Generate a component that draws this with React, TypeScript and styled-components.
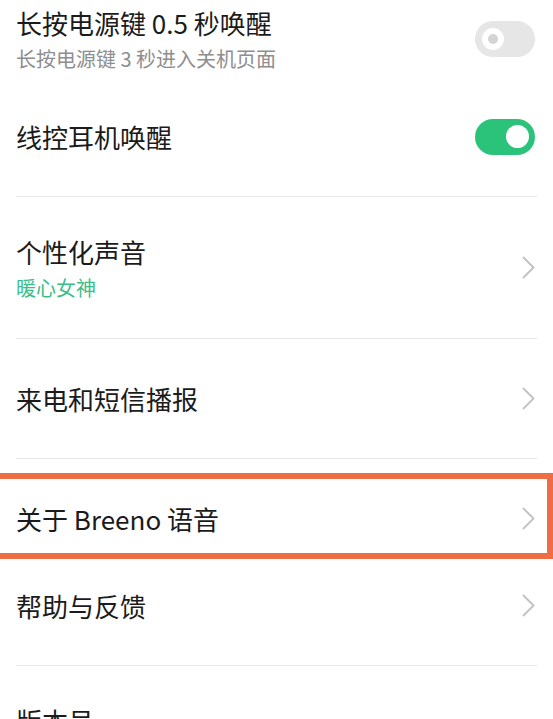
import React from "react";
import styled, { createGlobalStyle } from "styled-components";

const GlobalStyle = createGlobalStyle`
  html, body {
    margin: 0;
    padding: 0;
    background: #ffffff;
    overflow: hidden;
  }
  body {
    font-family: "Noto Sans CJK SC", "Noto Sans", sans-serif;
  }
`;

const Screen = styled.div`
  width: 553px;
  height: 719px;
  overflow: hidden;
  background: #ffffff;
`;

// list is scrolled a little, so the first item is cut at the top
const List = styled.div`
  margin-top: -32px;
`;

const Group = styled.section`
  padding: 16px 0;
`;

const Divider = styled.div`
  height: 1px;
  margin: 0 16px;
  background: #e8e8e8;
`;

const Row = styled.div<{ $twoLine?: boolean; $marked?: boolean }>`
  position: relative;
  display: flex;
  align-items: center;
  height: ${(p) => (p.$twoLine ? "109px" : "87px")};
  padding: 0 18px 0 16px;
  box-sizing: border-box;

  ${(p) =>
    p.$marked &&
    `
    &::after {
      content: "";
      position: absolute;
      top: -2px;
      bottom: 3px;
      left: -10px;
      right: 0;
      border: 6px solid #ef6d44;
      pointer-events: none;
    }
  `}
`;

const Texts = styled.div`
  flex: 1;
  display: flex;
  flex-direction: column;
  gap: 6px;
`;

const Title = styled.div`
  font-size: 26px;
  line-height: 34px;
  color: #1b1b1b;
`;

const Sub = styled.div<{ $accent?: boolean }>`
  font-size: 20px;
  line-height: 26px;
  color: ${(p) => (p.$accent ? "#3cbd8b" : "#8e8e8e")};
`;

const Toggle = styled.div<{ $on?: boolean }>`
  position: relative;
  width: 60px;
  height: 36px;
  border-radius: 18px;
  background: ${(p) => (p.$on ? "#2bc279" : "#e6e6e6")};
  flex-shrink: 0;

  &::after {
    content: "";
    position: absolute;
    top: 50%;
    box-sizing: border-box;
    border-radius: 50%;
    ${(p) =>
      p.$on
        ? `
      left: 31px;
      width: 23px;
      height: 23px;
      margin-top: -11.5px;
      background: #ffffff;
    `
        : `
      left: 7px;
      width: 22px;
      height: 22px;
      margin-top: -11px;
      background: #d4d4d4;
      border: 6px solid #ffffff;
    `}
  }
`;

const Chevron = () => (
  <svg width="13" height="23" viewBox="0 0 13 23" style={{ flexShrink: 0 }}>
    <polyline
      points="1.5,1.5 11.5,11.5 1.5,21.5"
      fill="none"
      stroke="#c2c2c2"
      strokeWidth="1.8"
      strokeLinecap="round"
      strokeLinejoin="round"
    />
  </svg>
);

export default function App() {
  return (
    <Screen>
      <GlobalStyle />
      <List>
        <Group>
          <Row $twoLine>
            <Texts>
              <Title>长按电源键 0.5 秒唤醒</Title>
              <Sub>长按电源键 3 秒进入关机页面</Sub>
            </Texts>
            <Toggle />
          </Row>
          <Row>
            <Texts>
              <Title>线控耳机唤醒</Title>
            </Texts>
            <Toggle $on />
          </Row>
        </Group>
        <Divider />
        <Group>
          <Row $twoLine>
            <Texts>
              <Title>个性化声音</Title>
              <Sub $accent>暖心女神</Sub>
            </Texts>
            <Chevron />
          </Row>
        </Group>
        <Divider />
        <Group>
          <Row>
            <Texts>
              <Title>来电和短信播报</Title>
            </Texts>
            <Chevron />
          </Row>
        </Group>
        <Divider />
        <Group>
          <Row $marked>
            <Texts>
              <Title>关于 Breeno 语音</Title>
            </Texts>
            <Chevron />
          </Row>
          <Row>
            <Texts>
              <Title>帮助与反馈</Title>
            </Texts>
            <Chevron />
          </Row>
        </Group>
        <Divider />
        <Group>
          <Row $twoLine>
            <Texts>
              <Title>版本号</Title>
              <Sub>5.2.10</Sub>
            </Texts>
          </Row>
        </Group>
      </List>
    </Screen>
  );
}
